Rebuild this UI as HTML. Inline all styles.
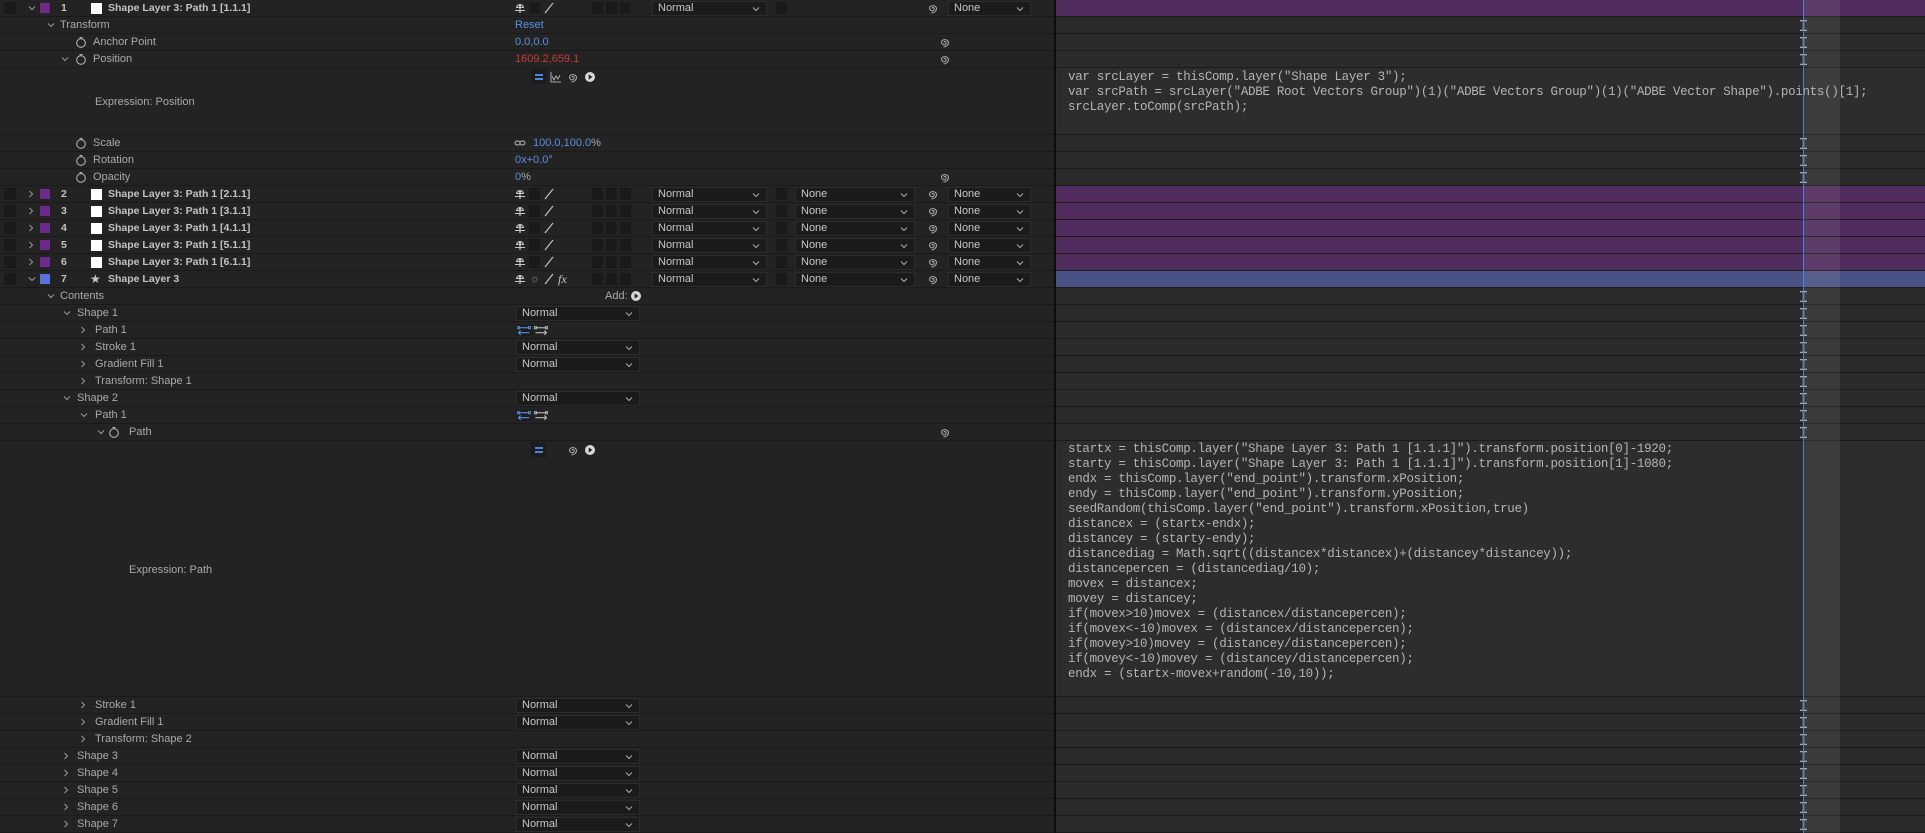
<!DOCTYPE html>
<html><head><meta charset="utf-8"><style>
*{margin:0;padding:0;box-sizing:border-box}
body{width:1925px;height:833px;background:#232323;position:relative;overflow:hidden;font-family:"Liberation Sans",sans-serif;font-size:11px;color:#a9a9a9}
.r{position:absolute;left:0;width:1054px;height:17px;border-bottom:1px solid #1a1a1a;background:#232323}
.t{position:absolute;left:1056px;width:869px;height:17px;border-bottom:1px solid #1b1b1b;background:#2b2b2b}
.t.p{background:#512c5e}.t.b{background:#4a5185}
.a{position:absolute;line-height:17px;white-space:nowrap}
.bx{position:absolute;top:2px;width:11px;height:12px;background:#1a1a1a}
.sw{position:absolute;top:3px;width:10px;height:10px}
.nm{color:#c2c2c2;font-weight:bold;font-size:10.5px}
.dd{position:absolute;top:1px;height:15px;background:#1b1b1b;border:1px solid #2c2c2c;color:#c6c6c6;font-size:11px;line-height:13px;padding-left:5px}
.dd svg{position:absolute;right:6px;top:4px}
.bl{color:#5a8fe2}.rd{color:#c53b36}
.code{position:absolute;left:1068px;width:857px;overflow:hidden;font-family:"Liberation Mono",monospace;font-size:12.5px;letter-spacing:-0.3px;line-height:15px;color:#b4b4b4;white-space:pre}
.band{position:absolute;left:1803px;width:37px;background:rgba(255,255,255,0.08)}
.ib{position:absolute;left:1800px;width:7px;height:11px}
</style></head><body>
<svg width="0" height="0" style="position:absolute">
<defs>
<symbol id="cr" viewBox="0 0 8 8"><polyline points="2.5,1 5.5,4 2.5,7" fill="none" stroke="#9a9a9a" stroke-width="1"/></symbol>
<symbol id="cd" viewBox="0 0 8 8"><polyline points="1,2.5 4,5.5 7,2.5" fill="none" stroke="#9a9a9a" stroke-width="1"/></symbol>
<symbol id="st" viewBox="0 0 12 12"><circle cx="6" cy="7" r="4.3" fill="none" stroke="#b0b0b0" stroke-width="1.1"/><line x1="4.5" y1="1.5" x2="7.5" y2="1.5" stroke="#b0b0b0"/><line x1="6" y1="1.5" x2="6" y2="2.7" stroke="#b0b0b0"/></symbol>
<symbol id="sp" viewBox="0 0 12 12"><path d="M6 6.5 a1 1 0 0 1 1.5-1 a2 2 0 0 1-1 3.4 a3 3 0 0 1-3-3.4 a4 4 0 0 1 7 0.5 a4.5 4.5 0 0 1-5 4.8" fill="none" stroke="#aaa" stroke-width="1"/></symbol>
<symbol id="sh" viewBox="0 0 12 12"><path d="M2 6 a4 4 0 0 1 8 0z" fill="#c8c8c8"/><rect x="5.4" y="6" width="1.2" height="5" fill="#c8c8c8"/><rect x="1" y="8" width="10" height="1" fill="#c8c8c8"/><circle cx="4.3" cy="4.3" r="0.8" fill="#232323"/><circle cx="7.7" cy="4.3" r="0.8" fill="#232323"/></symbol>
<symbol id="sl" viewBox="0 0 12 12"><line x1="2" y1="11" x2="10" y2="1" stroke="#c8c8c8" stroke-width="1.1"/></symbol>
<symbol id="pl" viewBox="0 0 12 12"><circle cx="6" cy="6" r="5" fill="#d8d8d8"/><path d="M4.7 3.4 L8.4 6 L4.7 8.6z" fill="#232323"/></symbol>
<symbol id="ddc" viewBox="0 0 8 6"><polyline points="1,1.5 4,4.5 7,1.5" fill="none" stroke="#aaa" stroke-width="1"/></symbol>
<symbol id="eq" viewBox="0 0 12 12"><rect x="2" y="3" width="8" height="2" fill="#4b86e6"/><rect x="2" y="7" width="8" height="2" fill="#4b86e6"/></symbol>
<symbol id="ib" viewBox="0 0 7 11"><rect x="0" y="0" width="7" height="1.3" fill="#aaa"/><rect x="0" y="9.7" width="7" height="1.3" fill="#aaa"/><rect x="2.7" y="0" width="1.6" height="11" fill="#aaa"/></symbol>
<symbol id="pt" viewBox="0 0 14 10"><rect x="0" y="0" width="14" height="10" fill="#1c1c1c"/><line x1="2" y1="2.5" x2="12" y2="2.5" stroke="#5a8fe2"/><rect x="1" y="1.5" width="2" height="2" fill="none" stroke="#5a8fe2" stroke-width=".8"/><rect x="11" y="1.5" width="2" height="2" fill="none" stroke="#5a8fe2" stroke-width=".8"/><line x1="2" y1="7" x2="12" y2="7" stroke="#5a8fe2"/><polyline points="4,5 2,7 4,9" fill="none" stroke="#5a8fe2"/></symbol>
<symbol id="pt2" viewBox="0 0 14 10"><line x1="2" y1="2.5" x2="12" y2="2.5" stroke="#bbb"/><rect x="1" y="1.5" width="2" height="2" fill="none" stroke="#bbb" stroke-width=".8"/><rect x="11" y="1.5" width="2" height="2" fill="none" stroke="#bbb" stroke-width=".8"/><line x1="2" y1="7" x2="12" y2="7" stroke="#bbb"/><polyline points="10,5 12,7 10,9" fill="none" stroke="#bbb"/></symbol>
</defs></svg>

<div style="position:absolute;left:1054px;top:0;width:2px;height:833px;background:#0e0e0e"></div>

<div class="r" style="top:0">
<div class="bx" style="left:4px;width:12px"></div>
<svg class="a" style="left:28px;top:4px" width="8" height="8"><use href="#cd"/></svg>
<div class="sw" style="left:40px;background:#6e2a8a"></div>
<span class="a nm" style="left:61px">1</span>
<div class="sw" style="left:91px;background:#fff;width:11px;height:11px;top:3px"></div>
<span class="a nm" style="left:108px">Shape Layer 3: Path 1 [1.1.1]</span>
<svg class="a" style="left:514px;top:2px" width="12" height="12"><use href="#sh"/></svg>
<div class="bx" style="left:529px"></div>
<svg class="a" style="left:543px;top:2px" width="12" height="12"><use href="#sl"/></svg>
<div class="bx" style="left:592px"></div><div class="bx" style="left:606px"></div><div class="bx" style="left:620px"></div>
<div class="dd" style="left:652px;width:115px">Normal<svg width="8" height="6"><use href="#ddc"/></svg></div>
<div class="bx" style="left:776px"></div>
<svg class="a" style="left:926px;top:2px" width="12" height="12"><use href="#sp"/></svg>
<div class="dd" style="left:948px;width:83px">None<svg width="8" height="6"><use href="#ddc"/></svg></div>
</div>
<div class="r" style="top:17px"><svg class="a" style="left:47px;top:4px" width="8" height="8"><use href="#cd"/></svg><span class="a" style="left:60px">Transform</span><span class="a bl" style="left:515px">Reset</span></div>
<div class="r" style="top:34px"><svg class="a" style="left:75px;top:2px" width="12" height="12"><use href="#st"/></svg><span class="a" style="left:93px">Anchor Point</span><span class="a bl" style="left:515px">0.0,0.0</span><svg class="a" style="left:938px;top:2px" width="12" height="12"><use href="#sp"/></svg></div>
<div class="r" style="top:51px"><svg class="a" style="left:61px;top:4px" width="8" height="8"><use href="#cd"/></svg><svg class="a" style="left:75px;top:2px" width="12" height="12"><use href="#st"/></svg><span class="a" style="left:93px">Position</span><span class="a rd" style="left:515px">1609.2,659.1</span><svg class="a" style="left:938px;top:2px" width="12" height="12"><use href="#sp"/></svg></div>
<div class="r" style="top:68px;height:67px">
<div style="position:absolute;left:531px;top:1px;width:15px;height:15px;background:#1c1c1c"></div>
<svg class="a" style="left:533px;top:3px" width="12" height="12"><use href="#eq"/></svg>
<svg class="a" style="left:550px;top:3px" width="12" height="12"><polyline points="1,1 1,11 11,11" fill="none" stroke="#aaa"/><polyline points="2,5 4,9 6,5 8,8 10,4" fill="none" stroke="#aaa"/></svg>
<svg class="a" style="left:566px;top:3px" width="12" height="12"><use href="#sp"/></svg>
<svg class="a" style="left:584px;top:3px" width="12" height="12"><use href="#pl"/></svg>
<span class="a" style="left:95px;top:26px">Expression: Position</span>
</div>
<div class="r" style="top:135px"><svg class="a" style="left:75px;top:2px" width="12" height="12"><use href="#st"/></svg><span class="a" style="left:93px">Scale</span><svg class="a" style="left:514px;top:3px" width="12" height="10"><rect x="1" y="3" width="5" height="4" rx="2" fill="none" stroke="#bbb"/><rect x="6" y="3" width="5" height="4" rx="2" fill="none" stroke="#bbb"/></svg><span class="a bl" style="left:533px">100.0,100.0<span style="color:#a9a9a9">%</span></span></div>
<div class="r" style="top:152px"><svg class="a" style="left:75px;top:2px" width="12" height="12"><use href="#st"/></svg><span class="a" style="left:93px">Rotation</span><span class="a bl" style="left:515px">0x+0.0°</span></div>
<div class="r" style="top:169px"><svg class="a" style="left:75px;top:2px" width="12" height="12"><use href="#st"/></svg><span class="a" style="left:93px">Opacity</span><span class="a bl" style="left:515px">0<span style="color:#a9a9a9">%</span></span><svg class="a" style="left:938px;top:2px" width="12" height="12"><use href="#sp"/></svg></div>

<div class="r" style="top:186px"><div class="bx" style="left:4px;width:12px"></div><svg class="a" style="left:27px;top:4px" width="8" height="8"><use href="#cr"/></svg><div class="sw" style="left:40px;background:#6e2a8a"></div><span class="a nm" style="left:61px">2</span><div class="sw" style="left:91px;background:#fff;width:11px;height:11px"></div><span class="a nm" style="left:108px">Shape Layer 3: Path 1 [2.1.1]</span><svg class="a" style="left:514px;top:2px" width="12" height="12"><use href="#sh"/></svg><div class="bx" style="left:529px"></div><svg class="a" style="left:543px;top:2px" width="12" height="12"><use href="#sl"/></svg><div class="bx" style="left:592px"></div><div class="bx" style="left:606px"></div><div class="bx" style="left:620px"></div><div class="dd" style="left:652px;width:115px">Normal<svg width="8" height="6"><use href="#ddc"/></svg></div><div class="bx" style="left:776px"></div><div class="dd" style="left:795px;width:120px">None<svg width="8" height="6"><use href="#ddc"/></svg></div><svg class="a" style="left:926px;top:2px" width="12" height="12"><use href="#sp"/></svg><div class="dd" style="left:948px;width:83px">None<svg width="8" height="6"><use href="#ddc"/></svg></div></div>
<div class="r" style="top:203px"><div class="bx" style="left:4px;width:12px"></div><svg class="a" style="left:27px;top:4px" width="8" height="8"><use href="#cr"/></svg><div class="sw" style="left:40px;background:#6e2a8a"></div><span class="a nm" style="left:61px">3</span><div class="sw" style="left:91px;background:#fff;width:11px;height:11px"></div><span class="a nm" style="left:108px">Shape Layer 3: Path 1 [3.1.1]</span><svg class="a" style="left:514px;top:2px" width="12" height="12"><use href="#sh"/></svg><div class="bx" style="left:529px"></div><svg class="a" style="left:543px;top:2px" width="12" height="12"><use href="#sl"/></svg><div class="bx" style="left:592px"></div><div class="bx" style="left:606px"></div><div class="bx" style="left:620px"></div><div class="dd" style="left:652px;width:115px">Normal<svg width="8" height="6"><use href="#ddc"/></svg></div><div class="bx" style="left:776px"></div><div class="dd" style="left:795px;width:120px">None<svg width="8" height="6"><use href="#ddc"/></svg></div><svg class="a" style="left:926px;top:2px" width="12" height="12"><use href="#sp"/></svg><div class="dd" style="left:948px;width:83px">None<svg width="8" height="6"><use href="#ddc"/></svg></div></div>
<div class="r" style="top:220px"><div class="bx" style="left:4px;width:12px"></div><svg class="a" style="left:27px;top:4px" width="8" height="8"><use href="#cr"/></svg><div class="sw" style="left:40px;background:#6e2a8a"></div><span class="a nm" style="left:61px">4</span><div class="sw" style="left:91px;background:#fff;width:11px;height:11px"></div><span class="a nm" style="left:108px">Shape Layer 3: Path 1 [4.1.1]</span><svg class="a" style="left:514px;top:2px" width="12" height="12"><use href="#sh"/></svg><div class="bx" style="left:529px"></div><svg class="a" style="left:543px;top:2px" width="12" height="12"><use href="#sl"/></svg><div class="bx" style="left:592px"></div><div class="bx" style="left:606px"></div><div class="bx" style="left:620px"></div><div class="dd" style="left:652px;width:115px">Normal<svg width="8" height="6"><use href="#ddc"/></svg></div><div class="bx" style="left:776px"></div><div class="dd" style="left:795px;width:120px">None<svg width="8" height="6"><use href="#ddc"/></svg></div><svg class="a" style="left:926px;top:2px" width="12" height="12"><use href="#sp"/></svg><div class="dd" style="left:948px;width:83px">None<svg width="8" height="6"><use href="#ddc"/></svg></div></div>
<div class="r" style="top:237px"><div class="bx" style="left:4px;width:12px"></div><svg class="a" style="left:27px;top:4px" width="8" height="8"><use href="#cr"/></svg><div class="sw" style="left:40px;background:#6e2a8a"></div><span class="a nm" style="left:61px">5</span><div class="sw" style="left:91px;background:#fff;width:11px;height:11px"></div><span class="a nm" style="left:108px">Shape Layer 3: Path 1 [5.1.1]</span><svg class="a" style="left:514px;top:2px" width="12" height="12"><use href="#sh"/></svg><div class="bx" style="left:529px"></div><svg class="a" style="left:543px;top:2px" width="12" height="12"><use href="#sl"/></svg><div class="bx" style="left:592px"></div><div class="bx" style="left:606px"></div><div class="bx" style="left:620px"></div><div class="dd" style="left:652px;width:115px">Normal<svg width="8" height="6"><use href="#ddc"/></svg></div><div class="bx" style="left:776px"></div><div class="dd" style="left:795px;width:120px">None<svg width="8" height="6"><use href="#ddc"/></svg></div><svg class="a" style="left:926px;top:2px" width="12" height="12"><use href="#sp"/></svg><div class="dd" style="left:948px;width:83px">None<svg width="8" height="6"><use href="#ddc"/></svg></div></div>
<div class="r" style="top:254px"><div class="bx" style="left:4px;width:12px"></div><svg class="a" style="left:27px;top:4px" width="8" height="8"><use href="#cr"/></svg><div class="sw" style="left:40px;background:#6e2a8a"></div><span class="a nm" style="left:61px">6</span><div class="sw" style="left:91px;background:#fff;width:11px;height:11px"></div><span class="a nm" style="left:108px">Shape Layer 3: Path 1 [6.1.1]</span><svg class="a" style="left:514px;top:2px" width="12" height="12"><use href="#sh"/></svg><div class="bx" style="left:529px"></div><svg class="a" style="left:543px;top:2px" width="12" height="12"><use href="#sl"/></svg><div class="bx" style="left:592px"></div><div class="bx" style="left:606px"></div><div class="bx" style="left:620px"></div><div class="dd" style="left:652px;width:115px">Normal<svg width="8" height="6"><use href="#ddc"/></svg></div><div class="bx" style="left:776px"></div><div class="dd" style="left:795px;width:120px">None<svg width="8" height="6"><use href="#ddc"/></svg></div><svg class="a" style="left:926px;top:2px" width="12" height="12"><use href="#sp"/></svg><div class="dd" style="left:948px;width:83px">None<svg width="8" height="6"><use href="#ddc"/></svg></div></div>
<div class="r" style="top:271px"><div class="bx" style="left:4px;width:12px"></div><svg class="a" style="left:28px;top:4px" width="8" height="8"><use href="#cd"/></svg><div class="sw" style="left:40px;background:#5a72d8"></div><span class="a nm" style="left:61px">7</span><span class="a" style="left:90px;color:#c8c8c8;font-size:12px">★</span><span class="a nm" style="left:108px">Shape Layer 3</span><svg class="a" style="left:514px;top:2px" width="12" height="12"><use href="#sh"/></svg><span class="a" style="left:530px;color:#888">☼</span><svg class="a" style="left:543px;top:2px" width="12" height="12"><use href="#sl"/></svg><span class="a" style="left:558px;color:#c8c8c8;font-style:italic;font-family:'Liberation Serif',serif;font-size:12px">fx</span><div class="bx" style="left:592px"></div><div class="bx" style="left:606px"></div><div class="bx" style="left:620px"></div><div class="dd" style="left:652px;width:115px">Normal<svg width="8" height="6"><use href="#ddc"/></svg></div><div class="bx" style="left:776px"></div><div class="dd" style="left:795px;width:120px">None<svg width="8" height="6"><use href="#ddc"/></svg></div><svg class="a" style="left:926px;top:2px" width="12" height="12"><use href="#sp"/></svg><div class="dd" style="left:948px;width:83px">None<svg width="8" height="6"><use href="#ddc"/></svg></div></div>
<div class="r" style="top:288px"><svg class="a" style="left:47px;top:4px" width="8" height="8"><use href="#cd"/></svg><span class="a" style="left:60px">Contents</span><span class="a" style="left:605px">Add:</span><svg class="a" style="left:630px;top:2px" width="12" height="12"><use href="#pl"/></svg></div>
<div class="r" style="top:305px"><svg class="a" style="left:63px;top:4px" width="8" height="8"><use href="#cd"/></svg><span class="a" style="left:77px">Shape 1</span><div class="dd" style="left:516px;width:124px">Normal<svg width="8" height="6"><use href="#ddc"/></svg></div></div>
<div class="r" style="top:322px"><svg class="a" style="left:79px;top:4px" width="8" height="8"><use href="#cr"/></svg><span class="a" style="left:95px">Path 1</span><svg class="a" style="left:516px;top:3px" width="16" height="11"><use href="#pt"/></svg><svg class="a" style="left:533px;top:3px" width="16" height="11"><use href="#pt2"/></svg></div>
<div class="r" style="top:339px"><svg class="a" style="left:79px;top:4px" width="8" height="8"><use href="#cr"/></svg><span class="a" style="left:95px">Stroke 1</span><div class="dd" style="left:516px;width:124px">Normal<svg width="8" height="6"><use href="#ddc"/></svg></div></div>
<div class="r" style="top:356px"><svg class="a" style="left:79px;top:4px" width="8" height="8"><use href="#cr"/></svg><span class="a" style="left:95px">Gradient Fill 1</span><div class="dd" style="left:516px;width:124px">Normal<svg width="8" height="6"><use href="#ddc"/></svg></div></div>
<div class="r" style="top:373px"><svg class="a" style="left:79px;top:4px" width="8" height="8"><use href="#cr"/></svg><span class="a" style="left:95px">Transform: Shape 1</span></div>
<div class="r" style="top:390px"><svg class="a" style="left:63px;top:4px" width="8" height="8"><use href="#cd"/></svg><span class="a" style="left:77px">Shape 2</span><div class="dd" style="left:516px;width:124px">Normal<svg width="8" height="6"><use href="#ddc"/></svg></div></div>
<div class="r" style="top:407px"><svg class="a" style="left:80px;top:4px" width="8" height="8"><use href="#cd"/></svg><span class="a" style="left:95px">Path 1</span><svg class="a" style="left:516px;top:3px" width="16" height="11"><use href="#pt"/></svg><svg class="a" style="left:533px;top:3px" width="16" height="11"><use href="#pt2"/></svg></div>
<div class="r" style="top:424px"><svg class="a" style="left:97px;top:4px" width="8" height="8"><use href="#cd"/></svg><svg class="a" style="left:108px;top:2px" width="12" height="12"><use href="#st"/></svg><span class="a" style="left:129px">Path</span><svg class="a" style="left:938px;top:2px" width="12" height="12"><use href="#sp"/></svg></div>
<div class="r" style="top:441px;height:256px">
<div style="position:absolute;left:531px;top:1px;width:15px;height:15px;background:#1c1c1c"></div>
<svg class="a" style="left:533px;top:3px" width="12" height="12"><use href="#eq"/></svg>
<svg class="a" style="left:566px;top:3px" width="12" height="12"><use href="#sp"/></svg>
<svg class="a" style="left:584px;top:3px" width="12" height="12"><use href="#pl"/></svg>
<span class="a" style="left:129px;top:121px">Expression: Path</span>
</div>
<div class="r" style="top:697px"><svg class="a" style="left:79px;top:4px" width="8" height="8"><use href="#cr"/></svg><span class="a" style="left:95px">Stroke 1</span><div class="dd" style="left:516px;width:124px">Normal<svg width="8" height="6"><use href="#ddc"/></svg></div></div>
<div class="r" style="top:714px"><svg class="a" style="left:79px;top:4px" width="8" height="8"><use href="#cr"/></svg><span class="a" style="left:95px">Gradient Fill 1</span><div class="dd" style="left:516px;width:124px">Normal<svg width="8" height="6"><use href="#ddc"/></svg></div></div>
<div class="r" style="top:731px"><svg class="a" style="left:79px;top:4px" width="8" height="8"><use href="#cr"/></svg><span class="a" style="left:95px">Transform: Shape 2</span></div>
<div class="r" style="top:748px"><svg class="a" style="left:62px;top:4px" width="8" height="8"><use href="#cr"/></svg><span class="a" style="left:77px">Shape 3</span><div class="dd" style="left:516px;width:124px">Normal<svg width="8" height="6"><use href="#ddc"/></svg></div></div>
<div class="r" style="top:765px"><svg class="a" style="left:62px;top:4px" width="8" height="8"><use href="#cr"/></svg><span class="a" style="left:77px">Shape 4</span><div class="dd" style="left:516px;width:124px">Normal<svg width="8" height="6"><use href="#ddc"/></svg></div></div>
<div class="r" style="top:782px"><svg class="a" style="left:62px;top:4px" width="8" height="8"><use href="#cr"/></svg><span class="a" style="left:77px">Shape 5</span><div class="dd" style="left:516px;width:124px">Normal<svg width="8" height="6"><use href="#ddc"/></svg></div></div>
<div class="r" style="top:799px"><svg class="a" style="left:62px;top:4px" width="8" height="8"><use href="#cr"/></svg><span class="a" style="left:77px">Shape 6</span><div class="dd" style="left:516px;width:124px">Normal<svg width="8" height="6"><use href="#ddc"/></svg></div></div>
<div class="r" style="top:816px"><svg class="a" style="left:62px;top:4px" width="8" height="8"><use href="#cr"/></svg><span class="a" style="left:77px">Shape 7</span><div class="dd" style="left:516px;width:124px">Normal<svg width="8" height="6"><use href="#ddc"/></svg></div></div>

<div class="t p" style="top:0"></div>
<div class="t" style="top:17px"></div><div class="t" style="top:34px"></div><div class="t" style="top:51px"></div>
<div class="t" style="top:68px;height:67px"><div style="position:absolute;left:6px;top:0;right:0;bottom:0;background:#2d2d2d"></div></div>
<div class="t" style="top:135px"></div><div class="t" style="top:152px"></div><div class="t" style="top:169px"></div>
<div class="t p" style="top:186px"></div><div class="t p" style="top:203px"></div><div class="t p" style="top:220px"></div><div class="t p" style="top:237px"></div><div class="t p" style="top:254px"></div>
<div class="t b" style="top:271px"></div>
<div class="t" style="top:288px"></div><div class="t" style="top:305px"></div><div class="t" style="top:322px"></div><div class="t" style="top:339px"></div><div class="t" style="top:356px"></div><div class="t" style="top:373px"></div><div class="t" style="top:390px"></div><div class="t" style="top:407px"></div><div class="t" style="top:424px"></div>
<div class="t" style="top:441px;height:256px"><div style="position:absolute;left:6px;top:0;right:0;bottom:0;background:#2d2d2d"></div></div>
<div class="t" style="top:697px"></div><div class="t" style="top:714px"></div><div class="t" style="top:731px"></div><div class="t" style="top:748px"></div><div class="t" style="top:765px"></div><div class="t" style="top:782px"></div><div class="t" style="top:799px"></div><div class="t" style="top:816px"></div>

<div class="band" style="top:0;height:833px"></div>

<div class="code" style="top:70px">var srcLayer = thisComp.layer("Shape Layer 3");
var srcPath = srcLayer("ADBE Root Vectors Group")(1)("ADBE Vectors Group")(1)("ADBE Vector Shape").points()[1];
srcLayer.toComp(srcPath);</div>
<div class="code" style="top:442px">startx = thisComp.layer("Shape Layer 3: Path 1 [1.1.1]").transform.position[0]-1920;
starty = thisComp.layer("Shape Layer 3: Path 1 [1.1.1]").transform.position[1]-1080;
endx = thisComp.layer("end_point").transform.xPosition;
endy = thisComp.layer("end_point").transform.yPosition;
seedRandom(thisComp.layer("end_point").transform.xPosition,true)
distancex = (startx-endx);
distancey = (starty-endy);
distancediag = Math.sqrt((distancex*distancex)+(distancey*distancey));
distancepercen = (distancediag/10);
movex = distancex;
movey = distancey;
if(movex>10)movex = (distancex/distancepercen);
if(movex&lt;-10)movex = (distancex/distancepercen);
if(movey>10)movey = (distancey/distancepercen);
if(movey&lt;-10)movey = (distancey/distancepercen);
endx = (startx-movex+random(-10,10));</div>

<svg class="ib" style="top:20px"><use href="#ib"/></svg><svg class="ib" style="top:37px"><use href="#ib"/></svg><svg class="ib" style="top:54px"><use href="#ib"/></svg>
<svg class="ib" style="top:138px"><use href="#ib"/></svg><svg class="ib" style="top:155px"><use href="#ib"/></svg><svg class="ib" style="top:172px"><use href="#ib"/></svg>
<svg class="ib" style="top:291px"><use href="#ib"/></svg><svg class="ib" style="top:308px"><use href="#ib"/></svg><svg class="ib" style="top:325px"><use href="#ib"/></svg><svg class="ib" style="top:342px"><use href="#ib"/></svg><svg class="ib" style="top:359px"><use href="#ib"/></svg><svg class="ib" style="top:376px"><use href="#ib"/></svg><svg class="ib" style="top:393px"><use href="#ib"/></svg><svg class="ib" style="top:410px"><use href="#ib"/></svg><svg class="ib" style="top:427px"><use href="#ib"/></svg>
<svg class="ib" style="top:700px"><use href="#ib"/></svg><svg class="ib" style="top:717px"><use href="#ib"/></svg><svg class="ib" style="top:734px"><use href="#ib"/></svg><svg class="ib" style="top:751px"><use href="#ib"/></svg><svg class="ib" style="top:768px"><use href="#ib"/></svg><svg class="ib" style="top:785px"><use href="#ib"/></svg><svg class="ib" style="top:802px"><use href="#ib"/></svg><svg class="ib" style="top:819px"><use href="#ib"/></svg>

<div style="position:absolute;left:1803px;top:0;width:1px;height:833px;background:#4a80dc"></div>
</body></html>
